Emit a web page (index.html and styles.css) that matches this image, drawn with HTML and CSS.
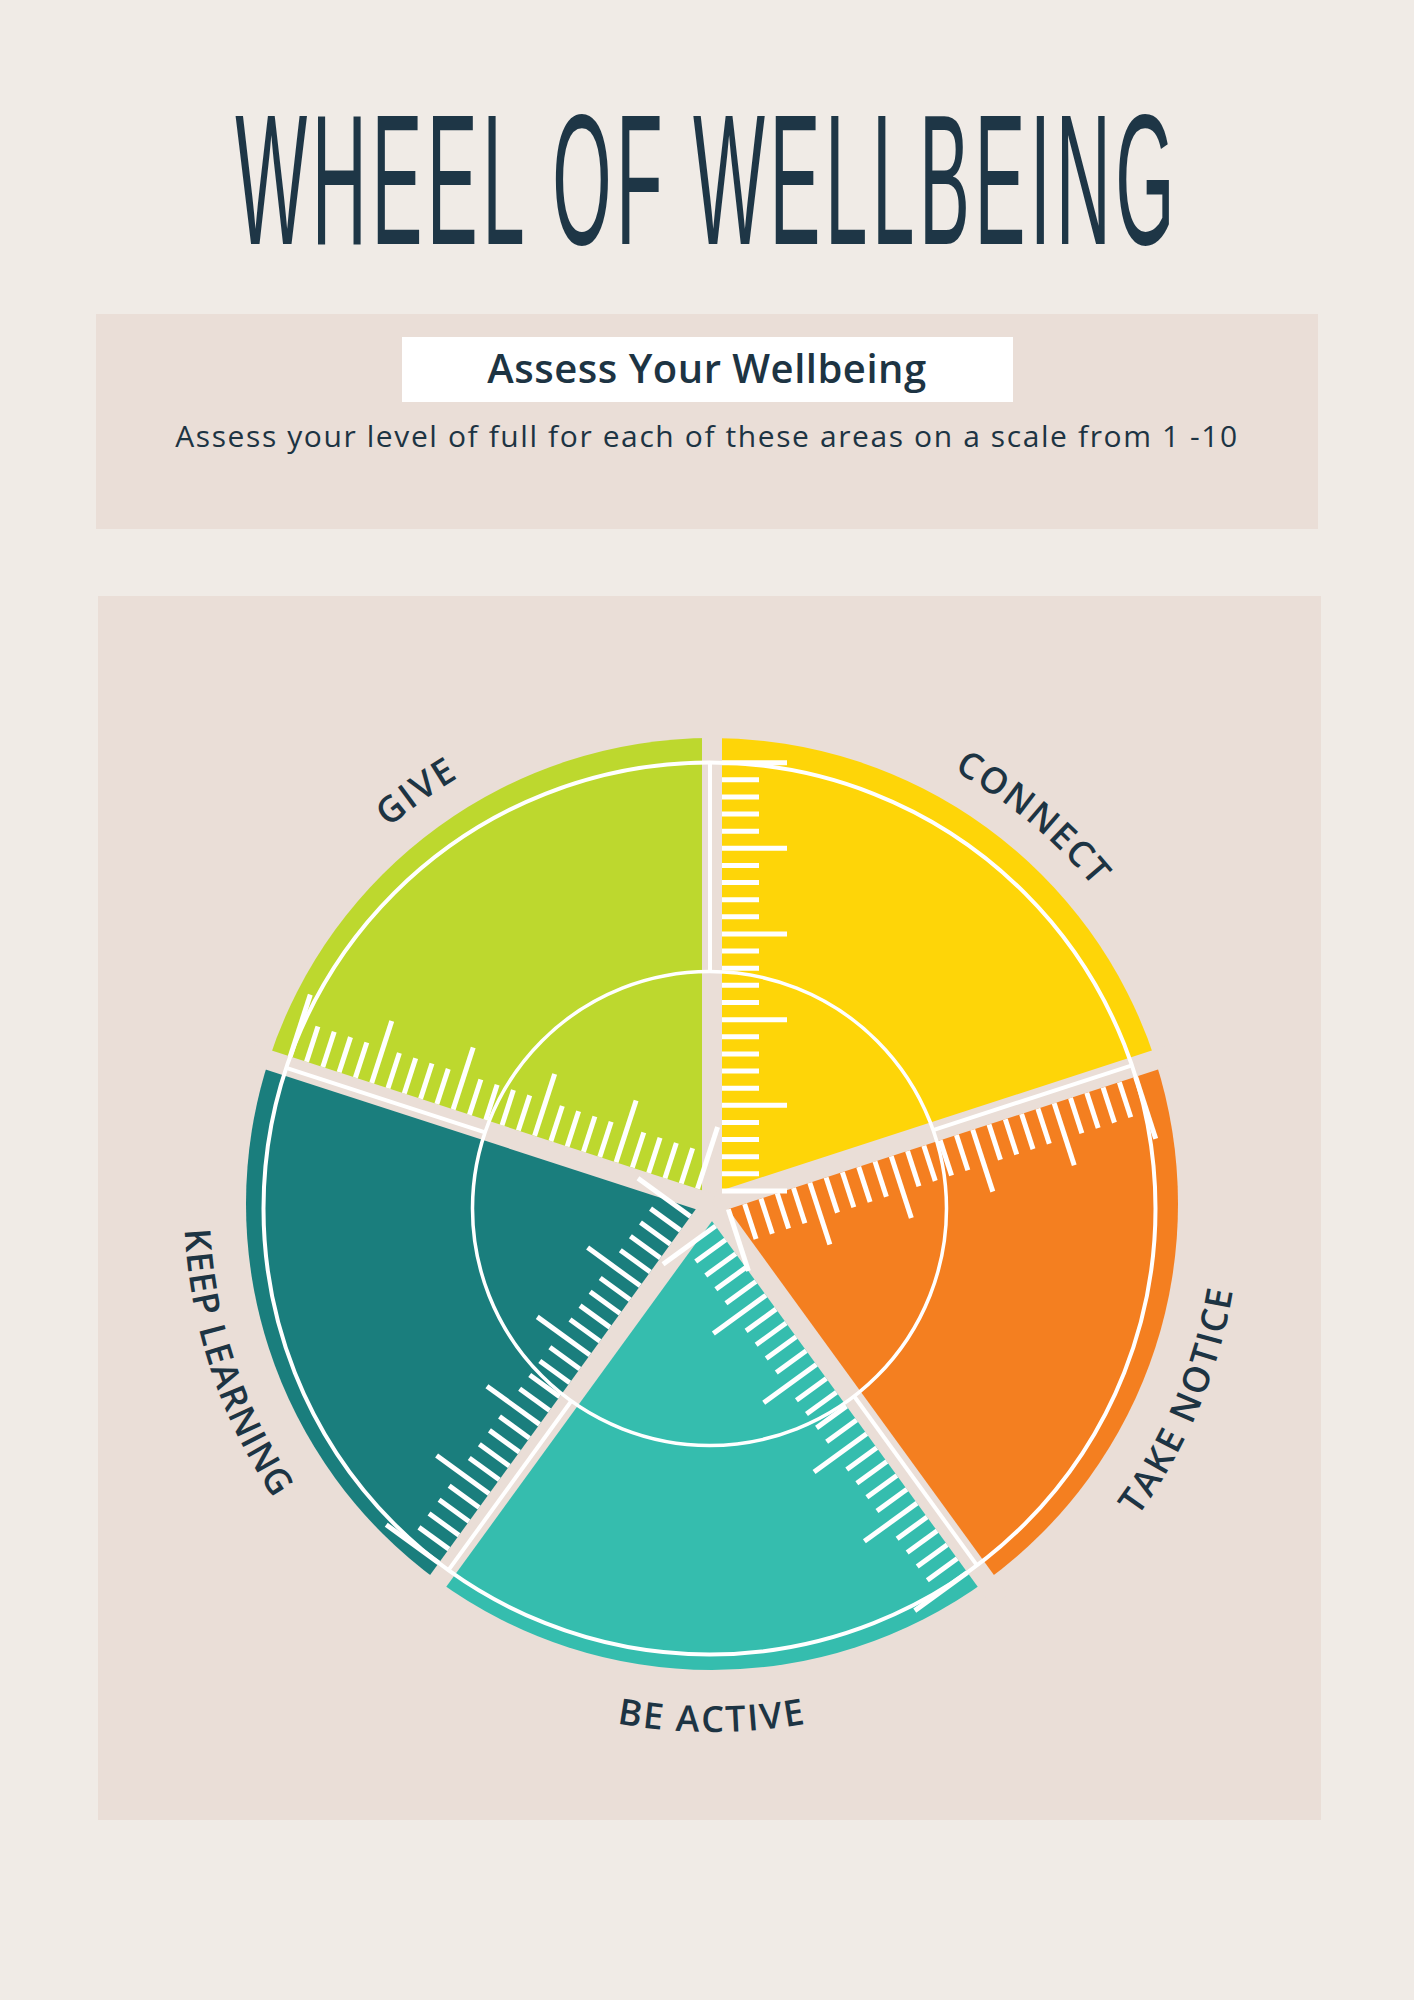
FILE: index.html
```html
<!DOCTYPE html>
<html lang="en">
<head>
<meta charset="utf-8">
<title>Wheel of Wellbeing</title>
<link rel="stylesheet" href="styles.css">
</head>
<body>
<div class="page">
  <h1 class="title"><span class="title-inner">WHEEL OF WELLBEING</span></h1>
  <section class="intro">
    <div class="intro-label">Assess Your Wellbeing</div>
    <p class="intro-text">Assess your level of full for each of these areas on a scale from 1 -10</p>
  </section>
  <section class="wheel-panel">
    <svg id="wheel" class="wheel" viewBox="98 596 1223 1224" xmlns="http://www.w3.org/2000/svg">
      <defs>
        <path id="arc-top" d="M 712,1700 A 496 496 0 1 1 712,708 A 496 496 0 1 1 712,1700"/>
        <path id="arc-bottom" d="M 712,676 A 528 528 0 1 0 712,1732 A 528 528 0 1 0 712,676"/>
      </defs>
      <g class="wedges">
        <path class="w-connect" d="M712,1204 L712,738 A466 466 0 0 1 1155.19,1060 Z"/>
        <path class="w-notice" d="M712,1204 L1155.19,1060 A466 466 0 0 1 985.91,1581 Z"/>
        <path class="w-active" d="M712,1204 L985.91,1581 A466 466 0 0 1 438.09,1581 Z"/>
        <path class="w-learning" d="M712,1204 L438.09,1581 A466 466 0 0 1 268.81,1060 Z"/>
        <path class="w-give" d="M712,1204 L268.81,1060 A466 466 0 0 1 712,738 Z"/>
      </g>
      <g class="gaps">
        <line x1="712" y1="1204" x2="712" y2="714"/>
        <line x1="712" y1="1204" x2="1177.92" y2="1052.58"/>
        <line x1="712" y1="1204" x2="1000.02" y2="1600.42"/>
        <line x1="712" y1="1204" x2="423.98" y2="1600.42"/>
        <line x1="712" y1="1204" x2="246.08" y2="1052.58"/>
      </g>
      <circle class="ring ring-outer" cx="709.5" cy="1208.5" r="446"/>
      <circle class="ring ring-inner" cx="709.5" cy="1208.5" r="237"/>
      <g id="ticks" class="ticks"></g>
      <text class="label"><textPath href="#arc-top" startOffset="40.11%" text-anchor="middle">GIVE</textPath></text>
      <text class="label"><textPath href="#arc-top" startOffset="61.06%" text-anchor="middle">CONNECT</textPath></text>
      <text class="label"><textPath href="#arc-bottom" startOffset="68.67%" text-anchor="middle">TAKE NOTICE</textPath></text>
      <text class="label"><textPath href="#arc-bottom" startOffset="50%" text-anchor="middle">BE ACTIVE</textPath></text>
      <text class="label label-tight"><textPath href="#arc-bottom" startOffset="30.11%" text-anchor="middle">KEEP LEARNING</textPath></text>
    </svg>
  </section>
</div>
<script src="app.js"></script>
</body>
</html>
```

FILE: styles.css
```css
html, body {
  margin: 0;
  padding: 0;
}
body {
  background: #F0EBE6;
  color: #1D3443;
  font-family: "Open Sans", "Liberation Sans", sans-serif;
}
.page {
  width: 1222px;
  margin: 0 auto;
  display: flex;
  flex-direction: column;
  align-items: stretch;
}
.title {
  margin: 0;
  padding-top: 87px;
  height: 186px;
  display: flex;
  justify-content: center;
  font-family: "Liberation Sans", "Arial", sans-serif;
  font-weight: 400;
  font-size: 186px;
  line-height: 186px;
  white-space: nowrap;
  color: #1E3646;
}
.title-inner {
  display: block;
  flex: none;
  letter-spacing: 0.06em;
  transform: scaleX(0.41);
  transform-origin: center;
}
.intro {
  margin-top: 41px;
  height: 215px;
  box-sizing: border-box;
  padding-top: 23px;
  background: #EADED7;
  display: flex;
  flex-direction: column;
  align-items: center;
}
.intro-label {
  width: 611px;
  height: 65px;
  box-sizing: border-box;
  padding-bottom: 4px;
  background: #FFFFFF;
  text-align: center;
  font-size: 40px;
  line-height: 61px;
  font-weight: 600;
  letter-spacing: 0.5px;
  color: #1D3443;
}
.intro-text {
  margin: 14px 0 0;
  font-size: 30px;
  line-height: 40px;
  letter-spacing: 1.6px;
  text-align: center;
  white-space: nowrap;
  color: #1D3443;
}
.wheel-panel {
  margin-top: 67px;
  margin-left: 2px;
  width: 1223px;
  height: 1224px;
  background: #EADED7;
}
.wheel {
  display: block;
  width: 1223px;
  height: 1224px;
}
.w-connect { fill: #FED508; }
.w-notice { fill: #F47F20; }
.w-active { fill: #35BDAE; }
.w-learning { fill: #1A7E7D; }
.w-give { fill: #BDD82E; }
.gaps line {
  stroke: #EADED7;
  stroke-width: 20;
}
.ring {
  fill: none;
  stroke: #FFFFFF;
}
.ring-outer { stroke-width: 4; }
.ring-inner { stroke-width: 3.5; }
.ticks .tick {
  stroke: #FFFFFF;
  stroke-width: 5;
}
.ticks .spine {
  stroke: #FFFFFF;
  stroke-width: 4;
}
.label {
  font-family: "Open Sans", "Liberation Sans", sans-serif;
  font-size: 36px;
  font-weight: 600;
  letter-spacing: 2px;
  fill: #1D3443;
}
.label-tight {
  letter-spacing: 1px;
}
```

FILE: app.js
```js
(function () {
  var NS = 'http://www.w3.org/2000/svg';
  var layer = document.getElementById('ticks');
  if (!layer) { return; }
  var C = { x: 712, y: 1204 };
  var O = { x: 709.5, y: 1208.5 };
  var RO = 446, RI = 237;
  function hit(px, py, ux, uy, R) {
    var dx = px - O.x, dy = py - O.y;
    var b = dx * ux + dy * uy;
    var c = dx * dx + dy * dy - R * R;
    return -b + Math.sqrt(b * b - c);
  }
  function line(x1, y1, x2, y2, cls) {
    var l = document.createElementNS(NS, 'line');
    l.setAttribute('x1', x1.toFixed(2));
    l.setAttribute('y1', y1.toFixed(2));
    l.setAttribute('x2', x2.toFixed(2));
    l.setAttribute('y2', y2.toFixed(2));
    l.setAttribute('class', cls);
    layer.appendChild(l);
  }
  for (var k = 0; k < 5; k++) {
    var a = k * 72 * Math.PI / 180;
    var ux = Math.sin(a), uy = -Math.cos(a);
    var tx = Math.cos(a), ty = Math.sin(a);
    var sx = C.x - 2 * tx, sy = C.y - 2 * ty;
    var s1 = hit(sx, sy, ux, uy, RI), s2 = hit(sx, sy, ux, uy, RO);
    line(sx + ux * s1, sy + uy * s1, sx + ux * s2, sy + uy * s2, 'spine');
    var bx = C.x + 10 * tx, by = C.y + 10 * ty;
    var r0 = hit(bx, by, ux, uy, RO);
    for (var i = 0; i < 26; i++) {
      var s = r0 - 17.13 * i;
      var L = (i % 5 === 0) ? 65 : 37;
      var x1 = bx + ux * s, y1 = by + uy * s;
      line(x1, y1, x1 + tx * L, y1 + ty * L, 'tick');
    }
  }
})();
```
